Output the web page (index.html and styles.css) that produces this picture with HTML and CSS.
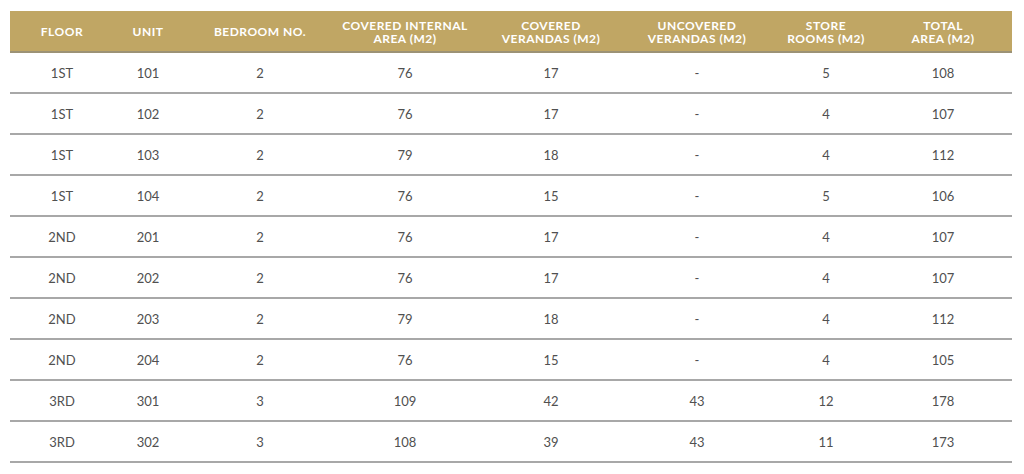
FILE: index.html
```html
<!DOCTYPE html>
<html>
<head>
<meta charset="utf-8">
<link rel="stylesheet" href="styles.css">
</head>
<body>
<table class="units">
  <colgroup>
    <col class="c1"><col class="c2"><col class="c3"><col class="c4"><col class="c5"><col class="c6"><col class="c7"><col class="c8">
  </colgroup>
  <thead>
    <tr>
      <th>FLOOR</th>
      <th>UNIT</th>
      <th>BEDROOM NO.</th>
      <th>COVERED INTERNAL<br>AREA (M2)</th>
      <th>COVERED<br>VERANDAS (M2)</th>
      <th>UNCOVERED<br>VERANDAS (M2)</th>
      <th>STORE<br>ROOMS (M2)</th>
      <th>TOTAL<br>AREA (M2)</th>
    </tr>
  </thead>
  <tbody>
    <tr><td>1ST</td><td>101</td><td>2</td><td>76</td><td>17</td><td>-</td><td>5</td><td>108</td></tr>
    <tr><td>1ST</td><td>102</td><td>2</td><td>76</td><td>17</td><td>-</td><td>4</td><td>107</td></tr>
    <tr><td>1ST</td><td>103</td><td>2</td><td>79</td><td>18</td><td>-</td><td>4</td><td>112</td></tr>
    <tr><td>1ST</td><td>104</td><td>2</td><td>76</td><td>15</td><td>-</td><td>5</td><td>106</td></tr>
    <tr><td>2ND</td><td>201</td><td>2</td><td>76</td><td>17</td><td>-</td><td>4</td><td>107</td></tr>
    <tr><td>2ND</td><td>202</td><td>2</td><td>76</td><td>17</td><td>-</td><td>4</td><td>107</td></tr>
    <tr><td>2ND</td><td>203</td><td>2</td><td>79</td><td>18</td><td>-</td><td>4</td><td>112</td></tr>
    <tr><td>2ND</td><td>204</td><td>2</td><td>76</td><td>15</td><td>-</td><td>4</td><td>105</td></tr>
    <tr><td>3RD</td><td>301</td><td>3</td><td>109</td><td>42</td><td>43</td><td>12</td><td>178</td></tr>
    <tr><td>3RD</td><td>302</td><td>3</td><td>108</td><td>39</td><td>43</td><td>11</td><td>173</td></tr>
  </tbody>
</table>
</body>
</html>
```
FILE: styles.css
```css
html, body {
  margin: 0;
  padding: 0;
  background: #ffffff;
}
body {
  padding: 11px 12px 0 10px;
  font-family: "Lato", "Liberation Sans", sans-serif;
}
.units {
  width: 1002px;
  border-collapse: collapse;
  table-layout: fixed;
}
.c1 { width: 104px; }
.c2 { width: 68px; }
.c3 { width: 156px; }
.c4 { width: 134px; }
.c5 { width: 158px; }
.c6 { width: 134px; }
.c7 { width: 124px; }
.c8 { width: 124px; }
.units th {
  background: #c0a664;
  color: #ffffff;
  font-weight: 700;
  font-size: 12px;
  letter-spacing: 0.5px;
  line-height: 13px;
  height: 39px;
  padding: 1px 0 0 0;
  text-align: center;
  vertical-align: middle;
  border-bottom: 2px solid #9c9276;
}
.units th:last-child,
.units td:last-child {
  padding-right: 14px;
}
.units td {
  height: 38px;
  padding: 1px 0 0 0;
  text-align: center;
  vertical-align: middle;
  font-size: 13px;
  color: #505050;
  border-bottom: 2px solid #a8a8a8;
}
```
